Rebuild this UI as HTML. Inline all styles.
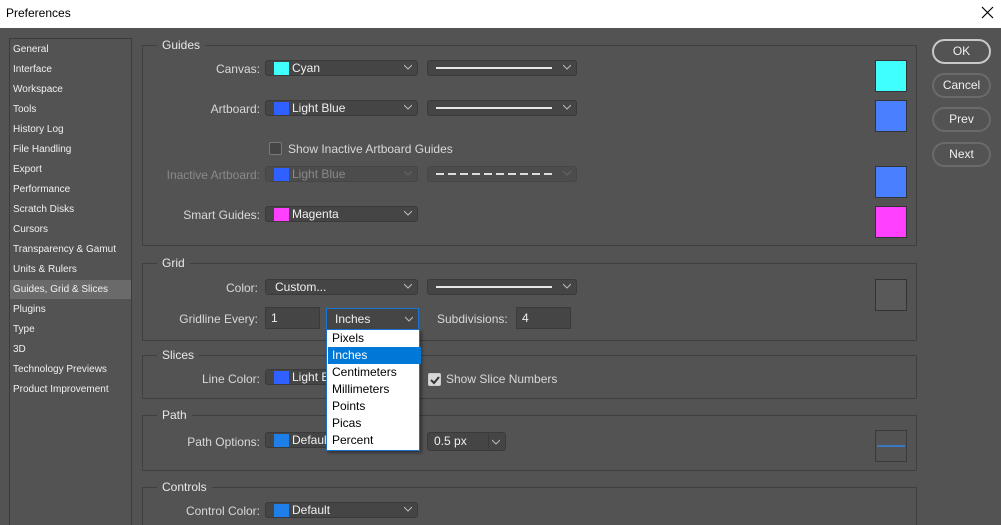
<!DOCTYPE html>
<html><head><meta charset="utf-8"><style>
*{margin:0;padding:0;box-sizing:border-box}
html,body{width:1001px;height:525px;overflow:hidden}
body{background:#535353;font-family:"Liberation Sans",sans-serif;position:relative;color:#e0e0e0}
.a{position:absolute}
.title{left:0;top:0;width:1001px;height:28px;background:#fff;color:#000;font-size:12px}
.side{left:9px;top:38px;width:123px;height:487px;border:1px solid #3c3c3c;border-bottom:none;background:#535353}
.si{position:absolute;left:3px;font-size:10px;color:#f0f0f0;height:18px;line-height:18px;width:118px}
.grp{border:1px solid #3f3f3f;border-radius:1px}
.gt{font-size:12px;color:#e8e8e8;background:#535353;padding:0 5px;line-height:14px}
.lbl{font-size:12px;color:#d8d8d8;text-align:right;line-height:16px}
.dd{background:#454545;border:1px solid #3a3a3a;border-radius:3px;height:16px;font-size:12px;line-height:14px;color:#f0f0f0}
.dd .sw{position:absolute;left:8px;top:1px;width:15px;height:13px}
.dd .t{position:absolute;left:26px;top:0}
.chev{position:absolute;right:5px;top:3px;width:8px;height:6px}
.ln{position:absolute;left:8px;top:6px;height:2px;background:#e6e6e6;width:116px}
.big{border:1px solid #333;width:32px;height:32px}
.btn{left:932px;width:59px;height:25px;border:2px solid #6a6a6a;border-radius:13px;text-align:center;font-size:12px;line-height:21px;color:#f0f0f0}
.inp{background:#454545;border:1px solid #3a3a3a;height:22px;font-size:12px;line-height:20px;padding-left:5px;color:#eee}
.li{position:absolute;left:1px;width:93px;height:17px;font-size:12px;line-height:17px;padding-left:4px;color:#000}
.cb{width:13px;height:13px;border:1px solid #7a7a7a;border-radius:2px;background:#454545}
</style></head><body>
<div class="a title"><span class="a" style="left:6px;top:6px">Preferences</span>
<svg class="a" style="left:981px;top:6px" width="13" height="13"><path d="M1 1L12 12M12 1L1 12" stroke="#000" stroke-width="1.2"/></svg></div>

<div class="a side">
<div class="si" style="top:2px">General</div>
<div class="si" style="top:22px">Interface</div>
<div class="si" style="top:42px">Workspace</div>
<div class="si" style="top:62px">Tools</div>
<div class="si" style="top:82px">History Log</div>
<div class="si" style="top:102px">File Handling</div>
<div class="si" style="top:122px">Export</div>
<div class="si" style="top:142px">Performance</div>
<div class="si" style="top:162px">Scratch Disks</div>
<div class="si" style="top:182px">Cursors</div>
<div class="si" style="top:202px">Transparency &amp; Gamut</div>
<div class="si" style="top:222px">Units &amp; Rulers</div>
<div class="si" style="top:241px;height:19px;line-height:19px;background:#6a6a6a;left:0;padding-left:3px;width:121px">Guides, Grid &amp; Slices</div>
<div class="si" style="top:262px">Plugins</div>
<div class="si" style="top:282px">Type</div>
<div class="si" style="top:302px">3D</div>
<div class="si" style="top:322px">Technology Previews</div>
<div class="si" style="top:342px">Product Improvement</div>
</div>

<div class="a grp" style="left:142px;top:45px;width:775px;height:201px"></div>
<div class="a gt" style="left:157px;top:38px">Guides</div>
<div class="a grp" style="left:142px;top:263px;width:775px;height:78px"></div>
<div class="a gt" style="left:157px;top:256px">Grid</div>
<div class="a grp" style="left:142px;top:355px;width:775px;height:44px"></div>
<div class="a gt" style="left:157px;top:348px">Slices</div>
<div class="a grp" style="left:142px;top:415px;width:775px;height:56px"></div>
<div class="a gt" style="left:157px;top:408px">Path</div>
<div class="a grp" style="left:142px;top:487px;width:775px;height:45px"></div>
<div class="a gt" style="left:157px;top:480px">Controls</div>

<div class="a lbl" style="left:140px;width:120px;top:61px">Canvas:</div>
<div class="a dd" style="left:265px;top:60px;width:153px"><div class="sw" style="background:#40ffff"></div><span class="t">Cyan</span><svg class="chev"><path d="M0 1L4 5L8 1" stroke="#bbb" fill="none"/></svg></div>
<div class="a dd" style="left:427px;top:60px;width:150px"><div class="ln"></div><svg class="chev"><path d="M0 1L4 5L8 1" stroke="#bbb" fill="none"/></svg></div>
<div class="a lbl" style="left:140px;width:120px;top:101px">Artboard:</div>
<div class="a dd" style="left:265px;top:100px;width:153px"><div class="sw" style="background:#3060ff"></div><span class="t">Light Blue</span><svg class="chev"><path d="M0 1L4 5L8 1" stroke="#bbb" fill="none"/></svg></div>
<div class="a dd" style="left:427px;top:100px;width:150px"><div class="ln"></div><svg class="chev"><path d="M0 1L4 5L8 1" stroke="#bbb" fill="none"/></svg></div>
<div class="a cb" style="left:269px;top:142px"></div>
<div class="a lbl" style="left:288px;top:141px;text-align:left">Show Inactive Artboard Guides</div>
<div class="a lbl" style="left:140px;width:120px;top:167px;color:#8a8a8a">Inactive Artboard:</div>
<div class="a dd" style="left:265px;top:166px;width:153px;background:#4c4c4c;border-color:#464646"><div class="sw" style="background:#3060ff"></div><span class="t" style="color:#8a8a8a">Light Blue</span><svg class="chev"><path d="M0 1L4 5L8 1" stroke="#666" fill="none"/></svg></div>
<div class="a dd" style="left:427px;top:166px;width:150px;background:#4c4c4c;border-color:#464646"><div class="ln" style="background:repeating-linear-gradient(90deg,#ddd 0 8px,transparent 8px 12px)"></div><svg class="chev"><path d="M0 1L4 5L8 1" stroke="#666" fill="none"/></svg></div>
<div class="a lbl" style="left:140px;width:120px;top:207px">Smart Guides:</div>
<div class="a dd" style="left:265px;top:206px;width:153px"><div class="sw" style="background:#ff40ff"></div><span class="t">Magenta</span><svg class="chev"><path d="M0 1L4 5L8 1" stroke="#bbb" fill="none"/></svg></div>
<div class="a big" style="left:875px;top:60px;background:#40ffff"></div>
<div class="a big" style="left:875px;top:100px;background:#4a80ff"></div>
<div class="a big" style="left:875px;top:166px;background:#4a80ff"></div>
<div class="a big" style="left:875px;top:206px;background:#ff40ff"></div>

<div class="a lbl" style="left:140px;width:118px;top:280px">Color:</div>
<div class="a dd" style="left:265px;top:279px;width:153px"><span class="t" style="left:9px">Custom...</span><svg class="chev"><path d="M0 1L4 5L8 1" stroke="#bbb" fill="none"/></svg></div>
<div class="a dd" style="left:427px;top:279px;width:150px"><div class="ln"></div><svg class="chev"><path d="M0 1L4 5L8 1" stroke="#bbb" fill="none"/></svg></div>
<div class="a lbl" style="left:140px;width:118px;top:311px">Gridline Every:</div>
<div class="a inp" style="left:265px;top:307px;width:55px">1</div>
<div class="a dd" style="left:326px;top:308px;width:93px;height:22px;border-color:#1a75d2;border-radius:0;line-height:20px"><span class="t" style="left:8px">Inches</span><svg class="chev" style="top:7px"><path d="M0 1L4 5L8 1" stroke="#bbb" fill="none"/></svg></div>
<div class="a lbl" style="left:437px;top:311px">Subdivisions:</div>
<div class="a inp" style="left:516px;top:307px;width:55px">4</div>
<div class="a big" style="left:875px;top:279px;background:#595959"></div>

<div class="a lbl" style="left:140px;width:120px;top:371px">Line Color:</div>
<div class="a dd" style="left:265px;top:369px;width:153px"><div class="sw" style="background:#3060ff"></div><span class="t">Light Blue</span></div>
<div class="a cb" style="left:428px;top:373px;background:#d8d8d8;border-color:#ccc"><svg class="a" style="left:1px;top:1px" width="10" height="10"><path d="M1 5L4 8L9 2" stroke="#333" stroke-width="2" fill="none"/></svg></div>
<div class="a lbl" style="left:446px;top:371px;text-align:left">Show Slice Numbers</div>

<div class="a lbl" style="left:140px;width:120px;top:434px">Path Options:</div>
<div class="a dd" style="left:265px;top:432px;width:153px"><div class="sw" style="background:#1e7fe8"></div><span class="t">Default</span></div>
<div class="a dd" style="left:427px;top:432px;width:79px;height:19px;line-height:17px"><span class="t" style="left:6px">0.5 px</span><div class="a" style="left:60px;top:1px;width:1px;height:15px;background:#3a3a3a"></div><svg class="chev" style="top:6px"><path d="M0 1L4 5L8 1" stroke="#bbb" fill="none"/></svg></div>
<div class="a big" style="left:875px;top:430px;background:#535353;border-color:#3a3a3a"><div class="a" style="left:1px;top:14px;width:28px;height:2px;background:#3b78c4"></div></div>

<div class="a lbl" style="left:140px;width:120px;top:503px">Control Color:</div>
<div class="a dd" style="left:265px;top:502px;width:153px"><div class="sw" style="background:#1e7fe8"></div><span class="t">Default</span><svg class="chev"><path d="M0 1L4 5L8 1" stroke="#bbb" fill="none"/></svg></div>

<div class="a" style="left:326px;top:329px;width:94px;height:122px;background:#fff;border:1px solid #1a6fc8;box-shadow:2px 2px 3px rgba(0,0,0,.4)">
<div class="li" style="top:0">Pixels</div>
<div class="li" style="top:17px;background:#0078d7;color:#fff">Inches</div>
<div class="li" style="top:34px">Centimeters</div>
<div class="li" style="top:51px">Millimeters</div>
<div class="li" style="top:68px">Points</div>
<div class="li" style="top:85px">Picas</div>
<div class="li" style="top:102px">Percent</div>
</div>

<div class="a btn" style="top:39px;border-color:#c8c8c8">OK</div>
<div class="a btn" style="top:73px">Cancel</div>
<div class="a btn" style="top:107px">Prev</div>
<div class="a btn" style="top:142px">Next</div>
</body></html>
